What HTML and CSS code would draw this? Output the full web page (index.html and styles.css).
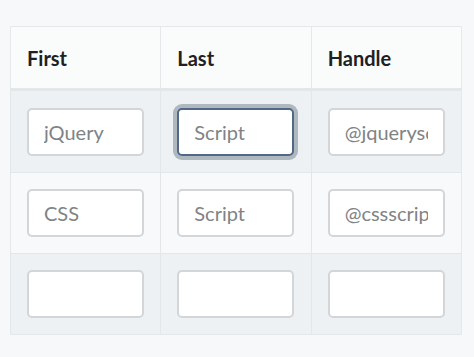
FILE: index.html
```html
<!DOCTYPE html>
<html lang="en">
<head>
    <meta charset="UTF-8">
    <meta name="viewport" content="width=device-width, initial-scale=1.0">
    <title>Editable table</title>

    <link rel="stylesheet" href="styles.css">
</head>
<body>
    <div class="wrap">
        <table class="grid">
            <thead>
                <tr>
                    <th>First</th>
                    <th>Last</th>
                    <th>Handle</th>
                </tr>
            </thead>
            <tbody>
                <tr>
                    <td><input type="text" class="field" placeholder="jQuery"></td>
                    <td><input type="text" class="field focus" placeholder="Script"></td>
                    <td><input type="text" class="field" placeholder="@jqueryscript"></td>
                </tr>
                <tr>
                    <td><input type="text" class="field" placeholder="CSS"></td>
                    <td><input type="text" class="field" placeholder="Script"></td>
                    <td><input type="text" class="field" placeholder="@cssscript"></td>
                </tr>
                <tr>
                    <td><input type="text" class="field"></td>
                    <td><input type="text" class="field"></td>
                    <td><input type="text" class="field"></td>
                </tr>
            </tbody>
        </table>
    </div>
</body>
</html>
```

FILE: styles.css
```css
body
{
    margin: 0;
    padding: 0;
    background: #f7f8f9;
    font-family: Lato, "Open Sans", sans-serif;
}

.wrap
{
    padding: 26px 12px 24px 10px;
}

.grid
{
    width: 452px;
    border-collapse: collapse;
    table-layout: fixed;
    border-left: 1px solid #e6e9eb;
    border-right: 1px solid #e6e9eb;
}

.grid th
{
    text-align: left;
    font-weight: bold;
    font-size: 20px;
    line-height: 29px;
    color: #1e2124;
    padding: 17px 16px 15px 16px;
    background: #fafbfb;
    border-top: 1px solid #e6e9eb;
    border-left: 1px solid #e6e9eb;
    border-bottom: 3px solid #e4e7ea;
}

.grid td
{
    padding: 16px 16px 16px 16px;
    border-left: 1px solid #e4e7ea;
    border-top: 1px solid #e4e7ea;
    vertical-align: middle;
}

.grid tbody tr:first-child td
{
    padding-top: 17px;
}

.grid tbody tr:nth-child(odd) td
{
    background: #eef1f3;
}

.grid tbody tr:nth-child(even) td
{
    background: #f8f9fa;
}

.grid tbody tr:last-child td
{
    border-bottom: 1px solid #e4e7ea;
}

.field
{
    display: block;
    box-sizing: border-box;
    width: 117px;
    height: 48px;
    padding: 0 15px;
    border: 2px solid #d3d6d9;
    border-radius: 5px;
    background: #fff;
    font-family: Lato, "Open Sans", sans-serif;
    font-size: 20px;
    color: #495057;
    outline: none;
}

.field::placeholder
{
    color: #808385;
    opacity: 1;
}

.focus
{
    border-color: #536886;
    box-shadow: 0 0 0 4px #aeb8bf;
}
```
